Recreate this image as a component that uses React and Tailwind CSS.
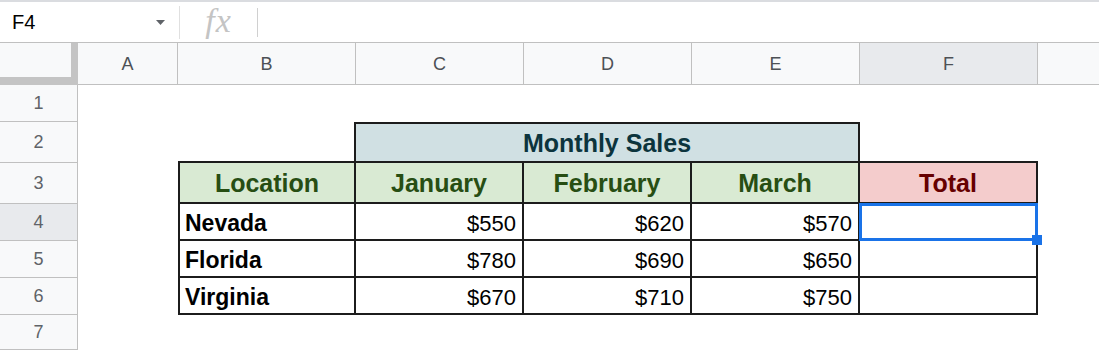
import React from "react";

const COLS = ["A", "B", "C", "D", "E", "F"];
const B = "border-[#1c1c1c]";

function Empty({ className = "" }) {
  return <div className={className} />;
}

function NameCell({ children }) {
  return (
    <div className={`flex items-center border-l-2 border-r-2 border-b-2 ${B} pl-[5px] pt-[3px] text-[23px] font-bold text-black`}>
      {children}
    </div>
  );
}

function NumCell({ children }) {
  return (
    <div className={`flex items-center justify-end border-r-2 border-b-2 ${B} pr-[6px] pt-[3px] text-[22px] text-black`}>
      {children}
    </div>
  );
}

function RowHead({ n, active }) {
  return (
    <div
      className={`flex items-center justify-center border-r border-b border-[#c0c0c0] pt-[1px] text-[18px] text-[#5f6368] ${
        active ? "bg-[#e8eaed]" : "bg-[#f8f9fa]"
      }`}
    >
      {n}
    </div>
  );
}

const data = [
  ["Nevada", "$550", "$620", "$570"],
  ["Florida", "$780", "$690", "$650"],
  ["Virginia", "$670", "$710", "$750"],
];

export default function App() {
  return (
    <div className="w-[1099px] h-[350px] overflow-hidden bg-white font-['Liberation_Sans',Arial,sans-serif]">
      <div className="h-[2px] bg-[#dadce0]" />
      {/* formula bar */}
      <div className="flex h-[41px] items-center border-b border-[#c0c0c0]">
        <div className="flex w-[179px] items-center justify-between pl-[12px] pr-[14px]">
          <span className="text-[20px] text-black leading-none">F4</span>
          <svg width="9" height="5" viewBox="0 0 9 5">
            <path d="M0 0h9L4.5 5z" fill="#5f6368" />
          </svg>
        </div>
        <div className="h-[33px] w-px bg-[#e0e0e0]" />
        <div className="flex w-[77px] items-center justify-center pb-[2px]">
          <span className="font-['Liberation_Serif',serif] italic text-[34px] leading-none text-[#c4c4c4] tracking-[1px]">
            fx
          </span>
        </div>
        <div className="h-[29px] w-px bg-[#d0d0d0]" />
      </div>

      {/* sheet grid */}
      <div className="grid grid-cols-[78px_100px_178px_168px_168px_168px_178px_1fr] grid-rows-[42px_37px_41px_41px_37px_37px_37px_1fr] h-[307px]">
        {/* header row */}
        <div className="bg-[#f8f9fa] border-r-[7px] border-b-[8px] border-[#c4c4c4]" />
        {COLS.map((c) => (
          <div
            key={c}
            className={`flex items-center justify-center border-r border-b border-[#c0c0c0] pt-[1px] text-[18px] text-[#4d5156] ${
              c === "F" ? "bg-[#e8eaed]" : "bg-[#f8f9fa]"
            }`}
          >
            {c}
          </div>
        ))}
        <div className="bg-[#f8f9fa] border-b border-[#c0c0c0]" />

        {/* row 1 */}
        <RowHead n={1} />
        <Empty />
        <Empty />
        <Empty />
        <Empty />
        <Empty />
        <Empty />
        <Empty />

        {/* row 2 */}
        <RowHead n={2} />
        <Empty />
        <Empty className={`border-r-2 border-b-2 ${B}`} />
        <div
          className={`col-span-3 flex items-center justify-center border-t-2 border-r-2 border-b-2 ${B} bg-[#d0e0e3] pt-[2px] text-[25px] font-bold text-[#0c343d]`}
        >
          Monthly Sales
        </div>
        <Empty className={`border-b-2 ${B}`} />
        <Empty />

        {/* row 3 */}
        <RowHead n={3} />
        <Empty />
        <div
          className={`flex items-center justify-center border-l-2 border-r-2 border-b-2 ${B} bg-[#d9ead3] pt-[2px] text-[25px] font-bold text-[#274e13]`}
        >
          Location
        </div>
        {["January", "February", "March"].map((m) => (
          <div
            key={m}
            className={`flex items-center justify-center border-r-2 border-b-2 ${B} bg-[#d9ead3] pt-[2px] text-[25px] font-bold text-[#274e13]`}
          >
            {m}
          </div>
        ))}
        <div
          className={`flex items-center justify-center border-r-2 border-b-2 ${B} bg-[#f4cccc] pt-[2px] text-[25px] font-bold text-[#660000]`}
        >
          Total
        </div>
        <Empty />

        {/* rows 4-6 */}
        {data.map((r, i) => (
          <React.Fragment key={r[0]}>
            <RowHead n={4 + i} active={i === 0} />
            <Empty />
            <NameCell>{r[0]}</NameCell>
            <NumCell>{r[1]}</NumCell>
            <NumCell>{r[2]}</NumCell>
            <NumCell>{r[3]}</NumCell>
            <div className={`relative border-r-2 border-b-2 ${B}`}>
              {i === 0 && (
                <>
                  <div className="absolute -left-px -top-px -right-[2px] -bottom-[2px] border-[3px] border-[#1a73e8]" />
                  <div className="absolute -right-[6px] -bottom-[6px] z-10 h-[10px] w-[10px] bg-[#1a73e8]" />
                </>
              )}
            </div>
            <Empty />
          </React.Fragment>
        ))}

        {/* row 7 */}
        <RowHead n={7} />
        <Empty />
        <Empty />
        <Empty />
        <Empty />
        <Empty />
        <Empty />
        <Empty />
      </div>
    </div>
  );
}
